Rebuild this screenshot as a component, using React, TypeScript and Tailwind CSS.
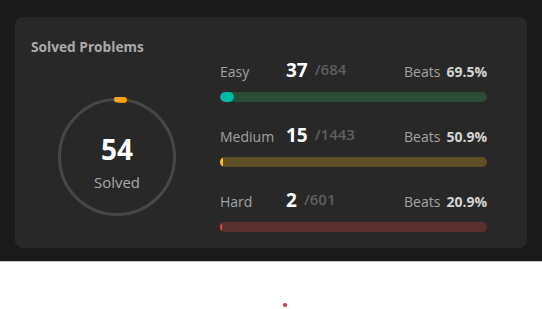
import React from "react";

const rows = [
  { label: "Easy", solved: 37, total: 684, beats: "69.5%", track: "bg-[#294d35]", fill: "bg-[#00b8a3]" },
  { label: "Medium", solved: 15, total: 1443, beats: "50.9%", track: "bg-[#5f4e26]", fill: "bg-[#ffc01e]" },
  { label: "Hard", solved: 2, total: 601, beats: "20.9%", track: "bg-[#5a302f]", fill: "bg-[#ef4743]" },
];

function Ring() {
  const r = 57.5;
  const c = 2 * Math.PI * r;
  const frac = 54 / 2728;
  return (
    <div className="relative w-[120px] h-[120px]">
      <svg width="120" height="120" viewBox="0 0 120 120" className="absolute inset-0">
        <circle cx="60" cy="60" r={r} fill="none" stroke="#474747" strokeWidth="3" />
        <circle
          cx="60"
          cy="60"
          r={r}
          fill="none"
          stroke="#ffa116"
          strokeWidth="6"
          strokeLinecap="round"
          strokeDasharray={`${c * frac} ${c}`}
          transform="rotate(-90 60 60)"
        />
      </svg>
      <div className="absolute inset-0 flex flex-col items-center justify-center">
        <div className="text-[28px] font-bold text-white leading-[34px] mt-[10px]">54</div>
        <div className="text-[15px] text-[#a8a8a8] leading-[20px] mt-[6px]">Solved</div>
      </div>
    </div>
  );
}

export default function App() {
  return (
    <div className="w-[542px] h-[309px] bg-white" style={{ fontFamily: '"Open Sans", "Noto Sans", sans-serif' }}>
      <div className="h-[262px] bg-[#1a1a1a] pt-[17px] px-[15px] border-b border-[#c4c4c4]">
        <div className="h-[231px] rounded-lg bg-[#282828] pt-5 px-4">
          <div className="text-[13.7px] font-bold text-[#aaaaaa] leading-5">Solved Problems</div>
          <div className="flex">
            <div className="w-[189px] pl-[26px] pt-[40px]">
              <Ring />
            </div>
            <div className="w-[267px] flex flex-col gap-[21px] mt-[1px]">
              {rows.map((row) => (
                <div key={row.label}>
                  <div className="flex items-baseline h-6 leading-6">
                    <span className="w-[66px] text-[14px] text-[#a3a3a3]">{row.label}</span>
                    <span className="text-[19px] font-bold text-white">{row.solved}</span>
                    <span className="ml-[7px] text-[15px] font-semibold text-[#5f5f5f] relative top-[-2px]">/{row.total}</span>
                    <span className="ml-auto text-[14px] text-[#a3a3a3]">Beats</span>
                    <span className="ml-[6px] text-[14px] font-bold text-[#d4d4d4]">{row.beats}</span>
                  </div>
                  <div className={`mt-[10px] h-[10px] w-full rounded-full overflow-hidden ${row.track}`}>
                    <div
                      className={`h-full rounded-full ${row.fill}`}
                      style={{ width: `${Math.max((row.solved / row.total) * 100, 0.8)}%` }}
                    />
                  </div>
                </div>
              ))}
            </div>
          </div>
        </div>
      </div>
      <div className="pl-[283px] pt-[41px]">
        <div className="w-[4px] h-[4px] rounded-full bg-[#d32f2f]" />
      </div>
    </div>
  );
}
